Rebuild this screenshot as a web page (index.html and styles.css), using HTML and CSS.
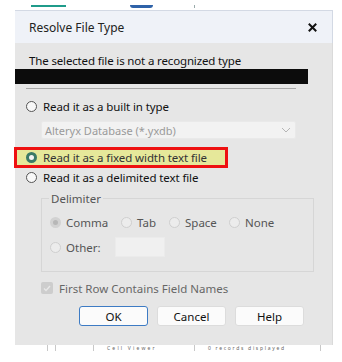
FILE: index.html
```html
<!DOCTYPE html>
<html>
<head>
<meta charset="utf-8">
<link rel="stylesheet" href="styles.css">
</head>
<body>
<div class="page">
  <div class="topstrip">
    <span class="teal"></span>
    <span class="blue"></span>
    <span class="tick"></span>
  </div>
  <div class="dialog">
    <div class="titlebar">
      <span class="title">Resolve File Type</span>
      <svg class="close" width="9" height="9" viewBox="0 0 9 9"><path d="M1.5 1.5L7.5 7.5M7.5 1.5L1.5 7.5" stroke="#111" stroke-width="2" stroke-linecap="square"/></svg>
    </div>
    <div class="body">
      <div class="msg">The selected file is not a recognized type</div>
      <div class="pathwrap">
        <div class="blackbar"></div>
        <div class="rule"></div>
      </div>
      <div class="opt opt1"><span class="radio"></span><span>Read it as a built in type</span></div>
      <div class="select"><span>Alteryx Database (*.yxdb)</span>
        <svg width="10" height="6" viewBox="0 0 10 6"><path d="M1 1L5 5L9 1" fill="none" stroke="#b5b5b5" stroke-width="1"/></svg>
      </div>
      <div class="hl">
        <div class="opt"><span class="radio sel"></span><span>Read it as a fixed width text file</span></div>
      </div>
      <div class="opt opt3"><span class="radio"></span><span>Read it as a delimited text file</span></div>
      <div class="group">
        <div class="legend">Delimiter</div>
        <div class="row row1">
          <span class="dr w-comma"><span class="radio dis dsel"></span>Comma</span>
          <span class="dr w-tab"><span class="radio dis"></span>Tab</span>
          <span class="dr w-space"><span class="radio dis"></span>Space</span>
          <span class="dr"><span class="radio dis"></span>None</span>
        </div>
        <div class="row row2">
          <span class="dr w-other"><span class="radio dis"></span>Other:</span>
          <span class="otherbox"></span>
        </div>
      </div>
      <div class="check"><span class="cbox"><svg width="8" height="7" viewBox="0 0 8 7"><path d="M1 3.5L3 5.5L7 1" fill="none" stroke="#e8e8e8" stroke-width="1.3"/></svg></span>First Row Contains Field Names</div>
      <div class="buttons">
        <button class="btn ok">OK</button>
        <button class="btn">Cancel</button>
        <button class="btn">Help</button>
      </div>
    </div>
    <div class="bottomstrip">
      <span class="seg s1"></span><span class="seg s2"></span><span class="seg s2b"></span><span class="seg s3">Cell Viewer</span><span class="seg s4">0 records displayed</span>
    </div>
  </div>
</div>
</body>
</html>
```
FILE: styles.css
```css
html, body { margin: 0; padding: 0; background: #ffffff; }
body { font-family: "Noto Sans", "Open Sans", sans-serif; font-size: 11px; color: #1a1a1a; }
.page { width: 342px; height: 362px; overflow: hidden; }
.topstrip { height: 10px; display: flex; align-items: flex-end; }
.teal { display: block; width: 35px; height: 2px; background: #1f9b8a; margin-left: 31px; margin-bottom: 3px; }
.blue { display: block; width: 23px; height: 3px; background: #2f62a8; border-radius: 0 0 12px 12px; margin-left: 64px; margin-bottom: 2px; }
.tick { display: block; width: 1px; height: 3px; background: #9aa; margin-left: 41px; margin-bottom: 2px; }
.dialog { margin-left: 15px; width: 318px; }
.titlebar { height: 33px; background: #eff2f8; border-top: 1px solid #d3d9e4; border-right: 1px solid #d3d9e4; box-sizing: border-box; display: flex; align-items: center; justify-content: space-between; padding: 0 15px 0 14px; }
.title { font-size: 12px; color: #222; }
.body { background: #e6e6e6; height: 302px; box-sizing: border-box; padding-top: 10px; border-right: 1px solid #dadada; }
.msg { margin-left: 14px; height: 16px; line-height: 16px; color: #111; font-size: 11.5px; letter-spacing: -0.15px; }
.pathwrap { height: 20px; }
.blackbar { height: 15px; width: 293px; background: #0c0c0c; }
.rule { height: 1px; width: 270px; background: #a8a8a8; margin-left: 11px; margin-top: 4px; }
.opt { display: flex; align-items: center; gap: 6px; height: 17px; color: #111; font-size: 11.5px; letter-spacing: -0.1px; }
.opt1 { margin-left: 11px; margin-top: 9px; }
.radio { width: 11px; height: 11px; border: 1px solid #555; border-radius: 50%; box-sizing: border-box; display: inline-block; background: #f8f8f8; flex: none; }
.radio.sel { border: 3.5px solid #3b7a66; background: #f4f4f4; }
.select { margin-left: 26px; margin-top: 6px; width: 255px; height: 18px; background: #f2f2f2; border: 1px solid #e9e9e9; box-sizing: border-box; border-radius: 2px; display: flex; align-items: center; justify-content: space-between; padding: 0 4px 0 3px; color: #9a9a9a; font-size: 11px; }
.hl { margin-left: -1px; margin-top: 8px; width: 214px; height: 21px; box-sizing: border-box; border: 3px solid #ee1111; background: #e6e89a; display: flex; align-items: center; padding-left: 9px; }
.hl .opt { color: #333; }
.opt3 { margin-left: 11px; margin-top: 1px; }
.group { margin-left: 26px; margin-top: 12px; width: 273px; height: 74px; box-sizing: border-box; border: 1px solid #d6d6d6; position: relative; }
.legend { position: absolute; top: -8px; left: 7px; background: #e6e6e6; padding: 0 2px; color: #555; font-size: 11.5px; line-height: 15px; }
.row { display: flex; align-items: center; color: #555; font-size: 11.5px; }
.row1 { margin-top: 16px; margin-left: 8px; height: 14px; }
.row2 { margin-top: 8px; margin-left: 8px; height: 20px; }
.dr { display: flex; align-items: center; gap: 5px; }
.dr .radio { border-color: #cfcfcf; background: #ececec; }
.radio.dsel { border: 3px solid #d2d2d2; background: #b7b7b7; }
.w-comma { width: 71px; }
.w-tab { width: 48px; }
.w-space { width: 60px; }
.w-other { width: 65px; }
.otherbox { width: 50px; height: 20px; background: #f0f0f0; border: 1px solid #ebebeb; box-sizing: border-box; }
.check { display: flex; align-items: center; gap: 6px; margin-left: 26px; margin-top: 9px; height: 14px; color: #666; font-size: 11.5px; }
.cbox { width: 12px; height: 12px; background: #cdcdcd; border-radius: 2px; display: flex; align-items: center; justify-content: center; }
.buttons { display: flex; gap: 9px; margin-left: 64px; margin-top: 11px; }
.btn { width: 69px; height: 20px; background: #fbfbfb; border: 1px solid #dcdcdc; border-radius: 3px; font-family: inherit; font-size: 11.5px; color: #111; padding: 0; }
.btn.ok { border: 1px solid #3d7bc4; }
.bottomstrip { height: 6px; display: flex; font-size: 5px; line-height: 6px; color: #666; }
.seg { display: block; height: 6px; border-right: 1px solid #c8c8c8; box-sizing: border-box; white-space: nowrap; }
.seg.s1 { width: 33px; }
.seg.s2 { width: 8px; }
.seg.s2b { width: 38px; }
.seg.s3 { width: 101px; padding-left: 13px; letter-spacing: 2.2px; }
.seg.s4 { width: 126px; padding-left: 13px; letter-spacing: 1.7px; }
```
